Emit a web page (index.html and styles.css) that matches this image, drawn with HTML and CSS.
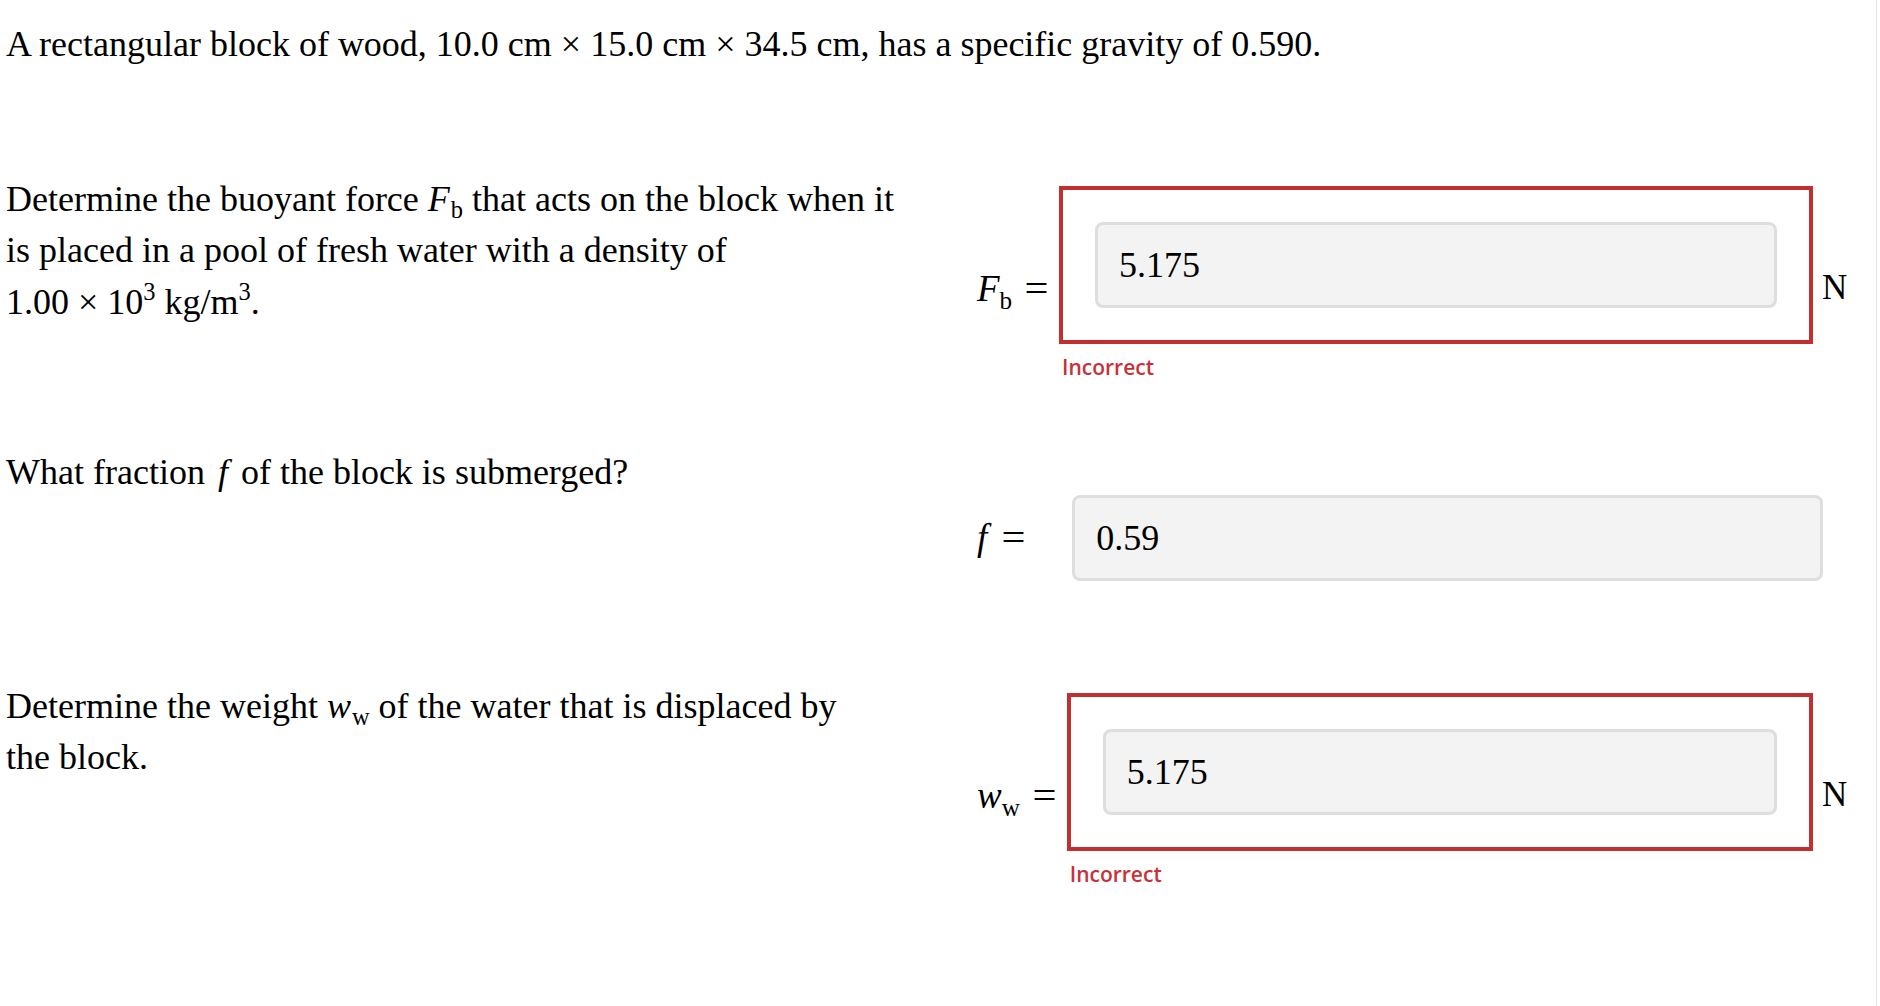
FILE: index.html
```html
<!DOCTYPE html>
<html>
<head>
<meta charset="utf-8">
<link rel="stylesheet" href="styles.css">
</head>
<body>
<div class="page">
  <p class="intro">A rectangular block of wood, 10.0 cm × 15.0 cm × 34.5 cm, has a specific gravity of 0.590.</p>
  <div class="parts">
    <section class="part">
      <div class="prompt"><p>Determine the buoyant force <span class="math"><i>F</i><sub>b</sub></span> that acts on the block when it is placed in a pool of fresh water with a density of <span class="nobr">1.00 × 10<sup>3</sup> kg/m<sup>3</sup>.</span></p></div>
      <div class="answer">
        <div class="label"><i>F</i><sub>b</sub><span class="eq">=</span></div>
        <div class="field">
          <div class="box wrong"><input class="input" type="text" value="5.175" readonly></div>
          <div class="feedback">Incorrect</div>
        </div>
        <div class="unit">N</div>
      </div>
    </section>
    <section class="part part-plain">
      <div class="prompt"><p>What fraction <i class="fi">f</i> of the block is submerged?</p></div>
      <div class="answer">
        <div class="label"><i class="fi">f</i><span class="eq">=</span></div>
        <div class="field">
          <div class="box"><input class="input" type="text" value="0.59" readonly></div>
        </div>
      </div>
    </section>
    <section class="part">
      <div class="prompt narrow"><p>Determine the weight <span class="math"><i>w</i><sub>w</sub></span> of the water that is displaced by the block.</p></div>
      <div class="answer">
        <div class="label"><i>w</i><sub>w</sub><span class="eq">=</span></div>
        <div class="field">
          <div class="box wrong"><input class="input" type="text" value="5.175" readonly></div>
          <div class="feedback">Incorrect</div>
        </div>
        <div class="unit">N</div>
      </div>
    </section>
  </div>
</div>
</body>
</html>
```

FILE: styles.css
```css
html, body {
  margin: 0;
  padding: 0;
  background: #ffffff;
}
body {
  font-family: "Liberation Serif", "Times New Roman", serif;
  color: #000000;
}
.page {
  width: 1877px;
  min-height: 1006px;
  box-sizing: border-box;
  border-right: 1px solid #e4e4e4;
  padding: 19px 17px 0 6px;
}
p {
  margin: 0;
}
.intro {
  font-size: 36px;
  line-height: 51.5px;
}
.parts {
  margin-top: 103px;
  display: flex;
  flex-direction: column;
  gap: 56px;
}
.part {
  display: grid;
  grid-template-columns: 971px 1fr;
  align-items: start;
}
.prompt p {
  font-size: 36px;
  line-height: 51.5px;
  max-width: 905px;
}
.prompt.narrow p {
  max-width: 860px;
}
.nobr {
  white-space: nowrap;
}
.math sub {
  margin-left: 1px;
}
.fi {
  margin: 0 4px;
}
sub, sup {
  font-size: 0.68em;
  line-height: 0;
  position: relative;
  vertical-align: baseline;
}
sub {
  top: 0.32em;
}
sup {
  top: -0.55em;
}
.answer {
  margin-top: 12px;
  display: flex;
  align-items: center;
}
.part-plain .answer {
  padding-bottom: 8px;
}
.label {
  font-size: 37px;
  white-space: nowrap;
}
.label .fi {
  margin: 0 2px 0 0;
}
.eq {
  display: inline-block;
  margin-left: 14px;
  transform: scaleX(1.15);
}
.field {
  flex: 1;
  margin-left: 12px;
  display: flex;
  flex-direction: column;
}
.box {
  border: 4px solid transparent;
  padding: 32px;
}
.box.wrong {
  border-color: #c1302e;
}
.input {
  display: block;
  width: 100%;
  height: 86px;
  box-sizing: border-box;
  margin: 0;
  border: 3px solid #dedede;
  border-radius: 8px;
  background: #f3f3f3;
  padding: 0 0 0 21px;
  font-family: "Liberation Serif", "Times New Roman", serif;
  font-size: 36px;
  color: #000000;
  outline: none;
}
.feedback {
  margin: 8px 0 9px 3px;
  font-family: "Open Sans", "Liberation Sans", sans-serif;
  font-weight: 600;
  font-size: 21px;
  line-height: 30px;
  color: #c5323a;
}
.unit {
  margin-left: 9px;
  font-size: 35px;
  width: 37px;
}
```
